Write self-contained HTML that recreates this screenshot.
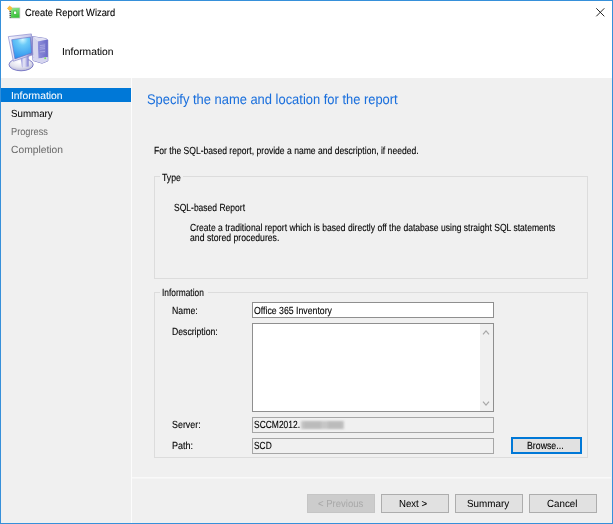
<!DOCTYPE html>
<html><head><meta charset="utf-8"><style>
html,body{margin:0;padding:0;}
body{width:613px;height:524px;overflow:hidden;position:relative;background:#f0f0f0;font-family:"Liberation Sans",sans-serif;}
.win{position:absolute;left:0;top:0;width:613px;height:524px;box-sizing:border-box;border:1px solid #3690da;}
.t{position:absolute;white-space:nowrap;line-height:1;transform-origin:0 0;text-rendering:geometricPrecision;-webkit-text-stroke:0.12px currentColor;}
</style></head><body>
<div style="position:absolute;left:1px;top:1px;width:611px;height:77px;box-sizing:border-box;background:#fff"></div>
<div style="position:absolute;left:1px;top:88px;width:130px;height:14px;box-sizing:border-box;background:#0078d7"></div>
<div style="position:absolute;left:131px;top:78px;width:1px;height:445px;box-sizing:border-box;background:#fcfcfc"></div>
<div style="position:absolute;left:132px;top:477px;width:479px;height:1px;box-sizing:border-box;background:#f9f9f9"></div>
<div style="position:absolute;left:132px;top:478px;width:479px;height:1px;box-sizing:border-box;background:#f5f5f5"></div>
<div style="position:absolute;left:154px;top:176px;width:434px;height:103px;box-sizing:border-box;border:1px solid #dcdcdc"></div>
<div style="position:absolute;left:160px;top:172px;width:23px;height:9px;box-sizing:border-box;background:#f0f0f0"></div>
<div style="position:absolute;left:154px;top:292px;width:434px;height:166px;box-sizing:border-box;border:1px solid #dcdcdc"></div>
<div style="position:absolute;left:160px;top:287px;width:48px;height:10px;box-sizing:border-box;background:#f0f0f0"></div>
<div style="position:absolute;left:252px;top:302px;width:242px;height:16px;box-sizing:border-box;border:1px solid #8f8f8f;background:#fff"></div>
<div style="position:absolute;left:252px;top:323px;width:242px;height:89px;box-sizing:border-box;border:1px solid #8f8f8f;background:#fff"></div>
<div style="position:absolute;left:480px;top:324px;width:13px;height:87px;box-sizing:border-box;background:#f0f0f0"></div>
<div style="position:absolute;left:252px;top:417px;width:242px;height:16px;box-sizing:border-box;border:1px solid #a6a6a6;background:#f0f0f0"></div>
<div style="position:absolute;left:252px;top:438px;width:242px;height:16px;box-sizing:border-box;border:1px solid #a6a6a6;background:#f0f0f0"></div>
<svg style="position:absolute;left:480px;top:328px" width="13" height="10"><path d="M3 6.3 L6 2.9 L9 6.3" fill="none" stroke="#a8a8a8" stroke-width="1.25"/></svg>
<svg style="position:absolute;left:480px;top:398px" width="13" height="10"><path d="M3 3.7 L6 7.1 L9 3.7" fill="none" stroke="#a8a8a8" stroke-width="1.25"/></svg>
<div style="position:absolute;left:301px;top:420.5px;width:43px;height:8px;background:#c6c6c6;filter:blur(0.8px)"></div>
<div style="position:absolute;left:304px;top:421.5px;width:17px;height:6px;background:#bbbbbb;filter:blur(1.2px)"></div>
<div style="position:absolute;left:328px;top:421.5px;width:14px;height:6px;background:#bbbbbb;filter:blur(1.2px)"></div>
<div style="position:absolute;left:511px;top:437px;width:71px;height:17px;box-sizing:border-box;border:2px solid #0078d7;background:#e1e1e1"></div>
<div style="position:absolute;left:307px;top:494px;width:68px;height:19px;box-sizing:border-box;border:1px solid #c5c5c5;background:#cccccc"></div>
<div style="position:absolute;left:381px;top:494px;width:68px;height:19px;box-sizing:border-box;border:1px solid #adadad;background:#e1e1e1"></div>
<div style="position:absolute;left:455px;top:494px;width:68px;height:19px;box-sizing:border-box;border:1px solid #adadad;background:#e1e1e1"></div>
<div style="position:absolute;left:529px;top:494px;width:68px;height:19px;box-sizing:border-box;border:1px solid #adadad;background:#e1e1e1"></div>
<svg style="position:absolute;left:594px;top:6px" width="13" height="13"><path d="M2.3 2.3 L10.3 10.3 M10.3 2.3 L2.3 10.3" stroke="#1a1a1a" stroke-width="0.95"/></svg>
<svg style="position:absolute;left:4px;top:3px" width="20" height="18" viewBox="0 0 20 18">
<defs><linearGradient id="bk" x1="0" y1="0" x2="0.3" y2="1"><stop offset="0" stop-color="#94e894"/><stop offset="1" stop-color="#3cc43c"/></linearGradient></defs>
<rect x="5.6" y="4.6" width="10.6" height="10.8" fill="#c0c0c0"/>
<rect x="6.8" y="4.9" width="8.6" height="9.8" fill="url(#bk)"/>
<rect x="9.2" y="7.6" width="3.8" height="4.2" fill="#4cbc4c"/>
<rect x="10" y="8.5" width="2.2" height="2.4" fill="#fff"/>
<path d="M6.2 8.1v1 M6.2 10.1v1 M6.2 12.1v1 M6.2 14v0.8" stroke="#2a2a2a" stroke-width="1.1"/>
<path d="M5.8 2.3 L6.6 4.2 L8.8 5.3 L6.6 6.4 L5.8 8.3 L5 6.4 L2.8 5.3 L5 4.2Z" fill="#f7b534"/>
<circle cx="5.8" cy="5.3" r="2.1" fill="#f9bb3c"/>
</svg>
<svg style="position:absolute;left:4px;top:30px" width="48" height="44" viewBox="0 0 48 44">
<defs>
<radialGradient id="scr" cx="0.55" cy="0.1" r="0.9"><stop offset="0" stop-color="#d4f8ff"/><stop offset="0.3" stop-color="#6ccbf8"/><stop offset="1" stop-color="#2e92ee"/></radialGradient>
<linearGradient id="bez" x1="0" y1="0" x2="1" y2="0.2"><stop offset="0" stop-color="#f6f6fe"/><stop offset="0.85" stop-color="#c8c8ea"/><stop offset="1" stop-color="#8888cc"/></linearGradient>
<linearGradient id="rf" x1="0" y1="0" x2="1" y2="0"><stop offset="0" stop-color="#9090dc"/><stop offset="1" stop-color="#6a6ac8"/></linearGradient>
<linearGradient id="neck" x1="0" y1="0" x2="1" y2="0"><stop offset="0" stop-color="#8c8cd8"/><stop offset="0.4" stop-color="#e6e6f6"/><stop offset="0.6" stop-color="#d0d0ee"/><stop offset="1" stop-color="#7a7ad0"/></linearGradient>
<radialGradient id="base" cx="0.45" cy="0.3" r="0.75"><stop offset="0" stop-color="#ffffff"/><stop offset="0.55" stop-color="#e2e2ee"/><stop offset="0.85" stop-color="#c0c0dc"/><stop offset="1" stop-color="#7474c0"/></radialGradient>
</defs>
<path d="M28.4 6.6 L41.8 8.6 L43.7 10 L43.8 31 L38 33.2 L29 30.5 Z" fill="#c8c8ea" stroke="#6a6abc" stroke-width="0.9"/>
<path d="M28.4 6.6 L41.8 8.6 L43.4 9.6 L33.8 11.6 Z" fill="#e2e2f4"/>
<path d="M33.8 11.6 L43.6 9.6 L43.7 27 L34.3 28.5 Z" fill="url(#rf)"/>
<path d="M28.7 7 L33.8 11.6 L34.3 28.5 L29 27.5 Z" fill="#d6d6ee"/>
<path d="M35.5 13.8 L41.4 13 L41.4 23.6 L35.5 24.2 Z" fill="#8282d2"/>
<path d="M35.8 15.6 L41 15 M35.8 17.4 L41 16.8 M35.8 19.2 L41 18.6 M35.8 22 L41 21.4" stroke="#b8b8ea" stroke-width="0.7"/>
<path d="M29 27.5 L34.3 28.5 L43.7 27 L43.8 31 L38 33.2 L29 30.5Z" fill="#d6d6f0"/>
<circle cx="41.2" cy="28.2" r="1" fill="#80e060"/>
<ellipse cx="17.1" cy="34.6" rx="12.1" ry="6.2" fill="url(#base)" stroke="#6666bc" stroke-width="0.8"/>
<path d="M16.6 27.5 L24.6 25.5 L24.6 36.6 L18 37.4 Z" fill="url(#neck)"/>
<path d="M4.3 6.6 L27.4 3.9 L28.9 24.8 L9.4 31.2 Z" fill="url(#bez)" stroke="#8c8cce" stroke-width="0.7"/>
<path d="M7.7 9.7 L26.3 7.1 L27.6 23 L10.9 28.9 Z" fill="url(#scr)" stroke="#6a6cc4" stroke-width="0.6"/>
</svg>
<div class="t" style="left:24.53px;top:9px;font-size:10.3px;color:#000;transform:scaleX(0.905)">Create Report Wizard</div>
<div class="t" style="left:61.97px;top:48px;font-size:10.3px;color:#000;transform:scaleX(1.001);-webkit-text-stroke:0.04px currentColor">Information</div>
<div class="t" style="left:10.97px;top:92px;font-size:10.3px;color:#fff;transform:scaleX(1.001);-webkit-text-stroke:0.04px currentColor">Information</div>
<div class="t" style="left:11.01px;top:110px;font-size:10.3px;color:#000;transform:scaleX(0.947);-webkit-text-stroke:0.04px currentColor">Summary</div>
<div class="t" style="left:10.81px;top:128px;font-size:10.3px;color:#6d6d6d;transform:scaleX(0.896);-webkit-text-stroke:0.04px currentColor">Progress</div>
<div class="t" style="left:10.99px;top:146px;font-size:10.3px;color:#6d6d6d;transform:scaleX(0.998);-webkit-text-stroke:0.04px currentColor">Completion</div>
<div class="t" style="left:147.35px;top:92px;font-size:14px;color:#1a6fdc;transform:scaleX(0.923);-webkit-text-stroke:0.04px currentColor">Specify the name and location for the report</div>
<div class="t" style="left:154.16px;top:147px;font-size:10.3px;color:#000;transform:scaleX(0.833)">For the SQL-based report, provide a name and description, if needed.</div>
<div class="t" style="left:162.08px;top:174px;font-size:10.3px;color:#000;transform:scaleX(0.846)">Type</div>
<div class="t" style="left:173.77px;top:204px;font-size:10.3px;color:#000;transform:scaleX(0.827)">SQL-based Report</div>
<div class="t" style="left:190.17px;top:224px;font-size:10.3px;color:#000;transform:scaleX(0.831)">Create a traditional report which is based directly off the database using straight SQL statements</div>
<div class="t" style="left:189.57px;top:234px;font-size:10.3px;color:#000;transform:scaleX(0.844)">and stored procedures.</div>
<div class="t" style="left:161.96px;top:289px;font-size:10.3px;color:#000;transform:scaleX(0.811)">Information</div>
<div class="t" style="left:172.15px;top:307px;font-size:10.3px;color:#000;transform:scaleX(0.847)">Name:</div>
<div class="t" style="left:172.15px;top:328px;font-size:10.3px;color:#000;transform:scaleX(0.841)">Description:</div>
<div class="t" style="left:253.66px;top:307px;font-size:10.3px;color:#000;transform:scaleX(0.848)">Office 365 Inventory</div>
<div class="t" style="left:171.85px;top:421px;font-size:10.3px;color:#000;transform:scaleX(0.865)">Server:</div>
<div class="t" style="left:171.62px;top:442px;font-size:10.3px;color:#000;transform:scaleX(0.875)">Path:</div>
<div class="t" style="left:254.48px;top:421px;font-size:10.3px;color:#000;transform:scaleX(0.821)">SCCM2012.</div>
<div class="t" style="left:254.48px;top:442px;font-size:10.3px;color:#000;transform:scaleX(0.815)">SCD</div>
<div class="t" style="left:527.04px;top:442px;font-size:10.3px;color:#000;transform:scaleX(0.852)">Browse...</div>
<div class="t" style="left:318.32px;top:500px;font-size:10.3px;color:#a9a9a9;transform:scaleX(0.924);-webkit-text-stroke:0.04px currentColor">&lt; Previous</div>
<div class="t" style="left:399.48px;top:500px;font-size:10.3px;color:#000;transform:scaleX(0.933);-webkit-text-stroke:0.04px currentColor">Next &gt;</div>
<div class="t" style="left:466.81px;top:500px;font-size:10.3px;color:#000;transform:scaleX(0.958);-webkit-text-stroke:0.04px currentColor">Summary</div>
<div class="t" style="left:547.31px;top:500px;font-size:10.3px;color:#000;transform:scaleX(0.948);-webkit-text-stroke:0.04px currentColor">Cancel</div>
<div class="win"></div>
</body></html>
